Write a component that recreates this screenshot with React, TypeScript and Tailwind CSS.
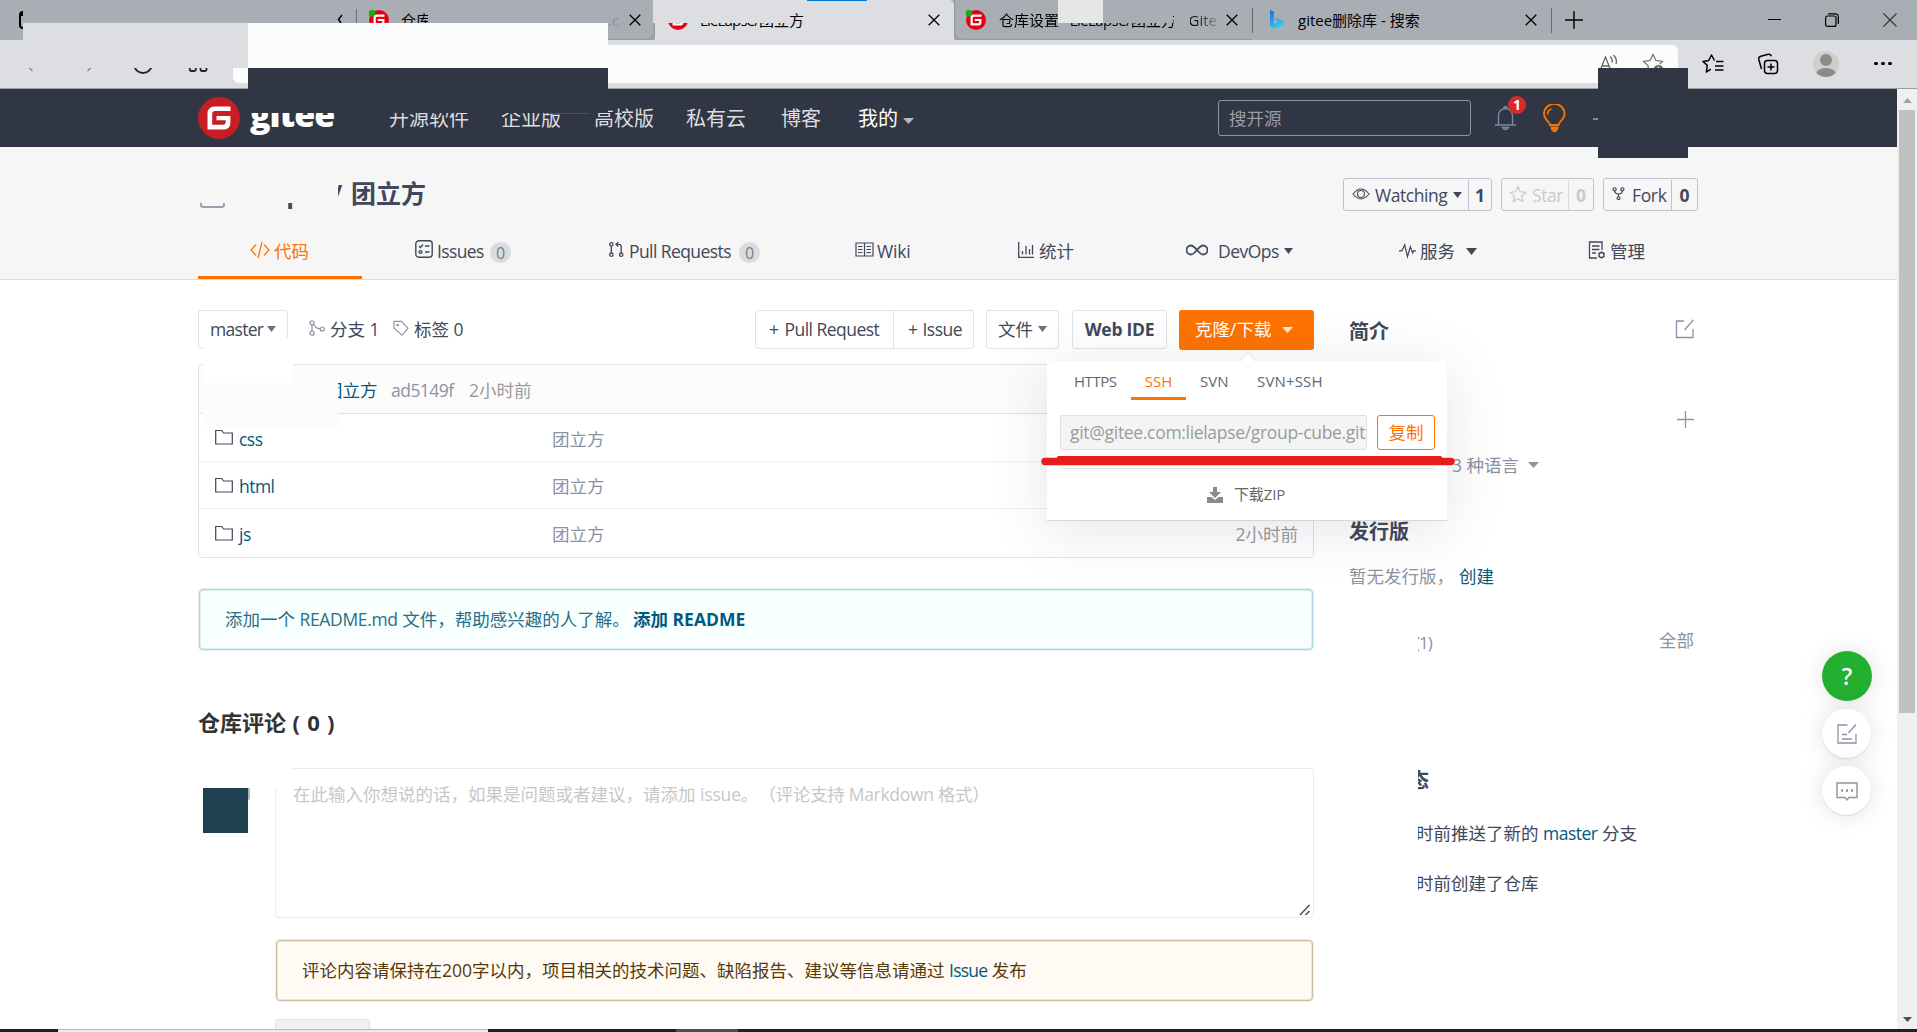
import React from 'react';

const MASK = 'absolute';

function Caret({ className }: { className: string }) {
  return (
    <svg viewBox="0 0 10 6" preserveAspectRatio="none" className={`shrink-0 ${className}`} fill="currentColor">
      <path d="M0 0h10L5 6z" />
    </svg>
  );
}

function Icon({ className, children, box = 20, sw = 1.3 }: { className: string; children: React.ReactNode; box?: number; sw?: number }) {
  return (
    <svg viewBox={`0 0 ${box} ${box}`} className={`shrink-0 ${className}`} fill="none" stroke="currentColor" strokeWidth={sw}>
      {children}
    </svg>
  );
}

function GiteeMark({ className, dot }: { className: string; dot?: boolean }) {
  return (
    <svg viewBox="0 0 42 42" className={`shrink-0 ${className}`}>
      <circle cx="21" cy="21" r="21" fill={dot ? '#e60012' : '#c71d23'} />
      <path
        d="M32.500 9.500H16A6.500 6.500 0 0 0 9.500 16v16.500h16.700a6.200 6.200 0 0 0 6.200-6.200v-7.300H18.500v4.200h9.200v1.800a2.800 2.800 0 0 1-2.800 2.800H14.200V17a3 3 0 0 1 3-3h15.300z"
        fill="#fff"
      />
      {dot && <circle cx="6" cy="7" r="7" fill="#0bb20c" />}
    </svg>
  );
}

function Cross({ className }: { className: string }) {
  return (
    <Icon box={12} sw={1.3} className={`size-[12px] ${className}`}>
      <path d="M.7.7l10.600 10.600M11.300.7L.7 11.300" />
    </Icon>
  );
}

function TabStrip() {
  return (
    <div className="relative flex h-[40px] shrink-0 items-start overflow-hidden bg-[#a9aeb4] text-[15px] text-black">
      <div className="flex h-[40px] w-[356px] shrink-0 items-center">
        <div className="ml-[19px] h-[18px] w-[16px] shrink-0 rounded-[4px] border-[2px] border-t-[5px] border-black" />
        <Icon box={12} sw={1.5} className="ml-[302px] size-[12px]"><path d="M5 1L1.500 5.500 4 9" /></Icon>
      </div>
      <div className="flex h-[40px] w-[299px] shrink-0 items-center rounded-br-[6px] shadow-[inset_-1px_-1px_2px_#8f949a]">
        <GiteeMark dot className="ml-[13px] size-[20px]" />
        <span className="ml-[12px] w-[228px] shrink-0 whitespace-nowrap leading-[20px]">仓库</span>
        <Cross className="" />
      </div>
      <div className="flex h-[40px] w-[299px] shrink-0 items-center rounded-t-[5px] bg-[#dddee1]">
        <GiteeMark dot className="ml-[13px] size-[20px]" />
        <span className="ml-[12px] w-[229px] shrink-0 whitespace-nowrap leading-[20px]"><span className="tracking-[-0.055em]">LieLapse/</span>团立方</span>
        <Cross className="-ml-[1px]" />
      </div>
      <div className="flex h-[40px] w-[298px] shrink-0 items-center rounded-bl-[6px] shadow-[inset_1px_-1px_2px_#8f949a]">
        <GiteeMark dot className="ml-[12px] size-[20px]" />
        <span className="ml-[13px] w-[228px] shrink-0 whitespace-nowrap bg-gradient-to-r from-black from-82% to-[#a9aeb4] to-98% bg-clip-text leading-[20px] text-transparent">仓库设置<span className="tracking-[-0.04em]"> - LieLapse/</span>团立方 - Gite</span>
        <Cross className="-ml-[1px]" />
      </div>
      <div className="mt-[8px] h-[25px] w-px shrink-0 bg-[#66696d]" />
      <div className="flex h-[40px] w-[298px] shrink-0 items-center">
        <svg viewBox="0 0 14 20" className="ml-[17px] h-[20px] w-[14px] shrink-0">
          <defs>
            <linearGradient id="bing" x1="0" y1="0" x2="0.6" y2="1">
              <stop offset="0" stopColor="#1b6fe0" />
              <stop offset="0.6" stopColor="#2fa9f4" />
              <stop offset="1" stopColor="#2bd3f0" />
            </linearGradient>
          </defs>
          <path d="M0 0l4 1.500v12.500l3.500-2-1.800-4L14 11v3.500L4.500 19 0 16z" fill="url(#bing)" />
        </svg>
        <span className="ml-[14px] w-[228px] shrink-0 whitespace-nowrap leading-[20px]">gitee删除库 - 搜索</span>
        <Cross className="-ml-[1px]" />
      </div>
      <div className="mt-[8px] h-[25px] w-px shrink-0 bg-[#66696d]" />
      <Icon box={18} sw={1.4} className="ml-[13px] mt-[11px] size-[18px]"><path d="M9 0v18M0 9h18" /></Icon>
      <div className="ml-[185px] mt-[19px] h-px w-[13px] shrink-0 bg-black" />
      <Icon box={14} sw={1.2} className="ml-[44px] mt-[13px] size-[14px]">
        <rect x=".6" y="3" width="10.400" height="10.400" rx="2" />
        <path d="M3 .8h7.500A2.800 2.800 0 0 1 13.300 3.600V11" />
      </Icon>
      <Icon box={14} sw={1.1} className="ml-[44px] mt-[13px] size-[14px] text-[#333]"><path d="M.5.5l13 13M13.500.5l-13 13" /></Icon>
    </div>
  );
}

function BrowserBar() {
  return (
    <div className="flex h-[49px] shrink-0 items-center border-b border-[#9b9fa3] bg-[#dddee1]">
      <Icon box={20} sw={1.3} className="ml-[24px] size-[20px] text-[#85878a]"><path d="M8.500 4L2 10.500l6.500 6.500" /></Icon>
      <Icon box={20} sw={1.3} className="ml-[33px] size-[20px] text-[#85878a]"><path d="M10.500 4l6.500 6.500-6.500 6.500" /></Icon>
      <Icon box={20} sw={1.8} className="ml-[36px] size-[20px] text-[#222]"><circle cx="10" cy="10" r="9" /></Icon>
      <Icon box={20} sw={1.8} className="ml-[35px] size-[20px] text-[#222]">
        <rect x="1.800" y="1" width="6" height="7" rx="1.500" /><rect x="12.500" y="1" width="6" height="7" rx="1.500" />
        <rect x="1.800" y="10" width="6" height="7" rx="1.500" /><rect x="12.500" y="10" width="6" height="7" rx="1.500" />
      </Icon>
      <div className="ml-[25px] flex h-[38px] w-[1445px] shrink-0 items-center rounded-[6px] bg-[#fcfcfc]">
        <Icon box={20} sw={1.3} className="ml-[1366px] size-[20px] text-[#666]">
          <path d="M1 17L6.500 3 12 17M3 12h7M11 2.500q3 2.500 2 6M14.500 1q4 4 2.500 9" />
        </Icon>
        <svg viewBox="0 0 22 22" className="ml-[23px] size-[22px]">
          <path d="M11 1.500l2.900 6 6.600.9-4.800 4.500 1.100 6.500L11 16.300l-5.800 3.100 1.100-6.500L1.500 8.400l6.600-.9z" fill="none" stroke="#777" strokeWidth="1.300" />
          <circle cx="16.500" cy="17" r="5.500" fill="#666" stroke="#fcfcfc" />
          <path d="M16.500 13.500v6" stroke="#fff" strokeWidth="1.200" />
        </svg>
      </div>
      <Icon box={22} sw={1.5} className="ml-[24px] size-[22px] text-black">
        <path d="M12.500 7.500L9.500 2 6.700 7.500l-5.700.9 4.300 4-1 6.600 4.500-2.800M14 8.500h7.500M13 13h8.500M13 17h8.500" strokeLinejoin="round" />
      </Icon>
      <Icon box={22} sw={1.5} className="ml-[33px] size-[22px] text-black">
        <rect x="7.500" y="7.500" width="13" height="13" rx="3" />
        <path d="M14 10.500v7M10.500 14h7M4.500 16L1.800 6.500q-.6-2.600 2-3.300l7.500-1.900q2.500-.5 3.200 2" />
      </Icon>
      <div className="ml-[34px] flex h-[26px] w-[26px] shrink-0 flex-col items-center overflow-hidden rounded-full bg-[#d0ceca]">
        <div className="mt-[3px] size-[12px] shrink-0 rounded-full bg-[#8d8a87]" />
        <div className="mt-[2px] h-[12px] w-[20px] shrink-0 rounded-[50%] bg-[#8d8a87]" />
      </div>
      <div className="-mt-[1px] ml-[35px] flex gap-[3.500px]">
        <i className="size-[3.500px] rounded-full bg-black" /><i className="size-[3.500px] rounded-full bg-black" /><i className="size-[3.500px] rounded-full bg-black" />
      </div>
    </div>
  );
}

function GiteeHeader() {
  return (
    <div className="flex h-[58px] shrink-0 items-center bg-[#303643] pt-[2px] text-[20px] leading-[28px] text-[#dcdde0]">
      <GiteeMark className="-mt-[2px] ml-[198px] size-[42px]" />
      <span className="-mt-[11px] ml-[10px] w-[139px] text-[34px] font-extrabold leading-[40px] tracking-[-0.03em] text-white">gitee</span>
      <span className="w-[112px]">开源软件</span>
      <span className="w-[93px]">企业版</span>
      <span className="w-[92px]">高校版</span>
      <span className="w-[95px]">私有云</span>
      <span className="w-[77px]">博客</span>
      <span className="w-[45px] whitespace-nowrap text-white">我的</span>
      <Caret className="mt-[4px] h-[6px] w-[11px] text-[#b6b9be]" />
      <div className="-mt-[3px] ml-[304px] flex h-[36px] w-[253px] items-center rounded-[3px] border border-[#8c92a4] pl-[10px] text-[17.500px] text-[#9a9ca3]">搜开源</div>
      <div className="relative -mt-[2px] ml-[24px] h-[26px] w-[22px]">
        <Icon box={24} sw={1.4} className="h-[26px] w-[24px] text-[#7888a8]">
          <path d="M0 19h21M3.500 19V9.500a7 7 0 0 1 14 0V19M9 2.500q0-2 1.500-2t1.500 2M7.500 21.500q3 4 6 0z" />
        </Icon>
        <div className="absolute -top-[9px] left-[13px] flex size-[18px] items-center justify-center rounded-full bg-[#db2828] text-[14px] font-bold leading-none text-white">1</div>
      </div>
      <Icon box={28} sw={1.8} className="-mt-[2px] ml-[23px] size-[28px] text-[#fe7300]">
        <path d="M10 21c0-3.500-6-5-6-11a10 10 0 0 1 20.500 0c0 6-6 7.500-6 11zM7.500 10.500q.3-4.500 4-5.500M10.500 23.500h8M11 25.300h7M12.500 27h4" />
      </Icon>
      <div className="ml-[25px] h-[2px] w-[6px] bg-[#7f88a0]" />
    </div>
  );
}

function Counter({ children }: { children: React.ReactNode }) {
  return <span className="mt-[3px] flex size-[21px] shrink-0 items-center justify-center rounded-full bg-[#dcdcdc] text-[16px] leading-none text-[#6f7c9c]">{children}</span>;
}

function RepoHead() {
  return (
    <div className="flex h-[133px] shrink-0 flex-col border-b border-[#dbdcde] bg-[#f6f6f6] text-[17.500px] text-[#40485b]">
      <div className="flex h-[92px] items-center whitespace-nowrap leading-[24px]">
        <div className="ml-[200px] mt-[2px] h-[28px] w-[25px] shrink-0 rounded-[3px] border-[2px] border-[#9a9fad]" />
        <span className="ml-[3px] w-[104px] shrink-0 text-[25px] font-bold leading-[32px] tracking-[-0.06em]">LieLapse</span>
        <span className="w-[19px] text-[25px] font-bold leading-[32px]">/</span>
        <span className="w-[992px] text-[25px] font-bold leading-[32px]">团立方</span>
        <div className="mt-[4px] flex h-[33px] w-[149px] items-center rounded-[3px] border border-[#bfc1ce]">
          <Icon box={20} sw={1.2} className="-mt-[2px] ml-[8px] size-[18px]"><path d="M1 10q9-11 18 0-9 11-18 0z" /><circle cx="10" cy="10" r="3.800" /></Icon>
          <span className="ml-[5px] w-[78px] tracking-[-0.025em]">Watching</span>
          <Caret className="h-[6px] w-[9px]" />
          <span className="ml-[6px] h-[30px] w-px bg-[#bfc1ce]" />
          <b className="flex-1 text-center">1</b>
        </div>
        <div className="ml-[9px] mt-[4px] flex h-[33px] w-[93px] items-center rounded-[3px] border border-[#bfc1ce] text-[#c9cacc]">
          <Icon box={20} sw={1.4} className="-mt-[2px] ml-[7px] size-[18px]"><path d="M10 2l2.500 5.500 6 .7-4.400 4 1.200 5.800L10 15.200 4.700 18l1.200-5.800-4.400-4 6-.7z" /></Icon>
          <span className="ml-[5px] w-[36px] tracking-[-0.025em]">Star</span>
          <span className="h-[30px] w-px bg-[#dcdde3]" />
          <b className="flex-1 text-center">0</b>
        </div>
        <div className="ml-[9px] mt-[4px] flex h-[33px] w-[95px] items-center rounded-[3px] border border-[#bfc1ce]">
          <Icon box={14} sw={1.3} className="-mt-[2px] ml-[8px] size-[13px]">
            <circle cx="2.800" cy="2.500" r="1.700" /><circle cx="11.200" cy="2.500" r="1.700" /><circle cx="7" cy="12" r="1.500" />
            <path d="M3 4.200q0 3 4 3.300 4-.3 4-3.300M7 7.500v3" />
          </Icon>
          <span className="ml-[7px] w-[39px] tracking-[-0.02em]">Fork</span>
          <span className="h-[30px] w-px bg-[#bfc1ce]" />
          <b className="flex-1 text-center">0</b>
        </div>
      </div>
      <div className="ml-[198px] flex h-[26px] items-center whitespace-nowrap leading-[24px]">
        <div className="flex h-[26px] w-[164px] items-center text-[#fe7300]">
          <Icon box={20} sw={1.3} className="-mt-[3px] ml-[52px] size-[20px]"><path d="M6 4.500L1 10l5 5.500M14 4.500l5 5.500-5 5.500M12 2L8 18" /></Icon>
          <span className="ml-[4px]">代码</span>
        </div>
        <Icon box={18} sw={1.4} className="-mt-[4px] ml-[53px] size-[18px]">
          <rect x=".8" y=".8" width="16.400" height="16.400" rx="3" />
          <path d="M4 6l1.500 1.500L8 4.500M10 6h4.500M10 12h4.500" /><circle cx="5.500" cy="12" r="1.400" />
        </Icon>
        <span className="ml-[4px] w-[53px] tracking-[-0.035em]">Issues</span>
        <Counter>0</Counter>
        <Icon box={16} sw={1.4} className="-mt-[4px] ml-[98px] size-[15px]">
          <circle cx="2.500" cy="2.500" r="1.800" /><circle cx="2.500" cy="13.500" r="1.800" /><circle cx="13" cy="13.500" r="1.800" />
          <path d="M2.500 4.500v7M13 11.500V5q0-2.500-2.500-2.500H7.500M9.800.2L7.500 2.500l2.300 2.300" />
        </Icon>
        <span className="ml-[5px] w-[110px] tracking-[-0.033em]">Pull Requests</span>
        <Counter>0</Counter>
        <Icon box={19} sw={1.2} className="-mt-[3px] ml-[95px] size-[19px]">
          <path d="M1 3h8.500v13H1zM9.500 3H18v13H9.500M3 6.500h4.500M3 9.500h4.500M3 12.500h4.500M11.500 6.500H16M11.500 9.500H16M11.500 12.500H16" />
        </Icon>
        <span className="ml-[3px] w-[141px] tracking-[-0.01em]">Wiki</span>
        <Icon box={16} sw={1.3} className="-mt-[3px] size-[16px]"><path d="M.7 0v15.300H16M4.500 12.500V9M8 12.500V4M11.500 12.500V7M14.500 12.500V3" /></Icon>
        <span className="ml-[5px] w-[147px]">统计</span>
        <Icon box={22} sw={1.8} className="-mt-[3px] size-[22px]"><path d="M11 11C8 7.500 6.500 6.500 5 6.500a4.500 4.500 0 0 0 0 9c1.500 0 3-1 6-4.500s4.500-4.500 6-4.500a4.500 4.500 0 0 1 0 9c-1.500 0-3-1-6-4.500z" /></Icon>
        <span className="ml-[10px] w-[66px] tracking-[-0.03em]">DevOps</span>
        <Caret className="h-[6px] w-[9px]" />
        <Icon box={18} sw={1.3} className="-mt-[2px] ml-[106px] size-[17px]"><path d="M0 9.500h3L6 3l3 12.500L12 5l2.500 6.500L15.500 9.500H18" /></Icon>
        <span className="ml-[4px] w-[46px]">服务</span>
        <Caret className="h-[7px] w-[11px]" />
        <Icon box={18} sw={1.3} className="-mt-[3px] ml-[111px] size-[18px]">
          <path d="M9 17H1.500V1h12.500v8M4 5h7.500M4 8.500h7.500M4 12h4" /><circle cx="13.500" cy="14" r="2.500" /><path d="M13.500 10.500v1M13.500 16.500v1M10.500 12.200l.9.500M15.600 15.300l.9.500M10.500 15.800l.9-.5M15.600 12.700l.9-.5" />
        </Icon>
        <span className="ml-[4px]">管理</span>
      </div>
      <div className="ml-[198px] mt-[12px] h-[3px] w-[164px] shrink-0 bg-[#fe7300]" />
    </div>
  );
}

function ActionRow() {
  return (
    <div className="flex h-[40px] items-start whitespace-nowrap leading-[22px]">
      <div className="flex h-[39px] w-[90px] items-center rounded-[3px] border border-[#dce3e8] pb-[2px]">
        <span className="ml-[11px] w-[57px] tracking-[-0.04em]">master</span>
        <Caret className="h-[6px] w-[9px] text-[#6b7283]" />
      </div>
      <div className="flex h-[39px] w-[467px] items-center pb-[2px]">
        <Icon box={16} sw={1.2} className="-mt-[2px] ml-[21px] size-[16px] text-[#8c92a4]">
          <circle cx="3" cy="2.800" r="2" /><circle cx="3" cy="13.200" r="2" /><circle cx="13.200" cy="9" r="2" /><path d="M3 4.800v6.400M4.800 4q1.500 4.500 6.400 4.800" />
        </Icon>
        <span className="ml-[5px] w-[62px]">分支 1</span>
        <Icon box={17} sw={1.2} className="-mt-[2px] ml-[1px] size-[16px] text-[#8c92a4]"><path d="M1 1.500h8L16 9l-6.500 7L1 8.500z" strokeLinejoin="round" /><circle cx="5" cy="5.300" r=".8" /></Icon>
        <span className="ml-[5px]">标签 0</span>
      </div>
      <div className="flex h-[39px] w-[219px] items-center rounded-[3px] border border-[#dce3e8] bg-white">
        <span className="flex w-[137px] gap-[6px] pb-[2px] pl-[13px] tracking-[-0.03em]"><i className="not-italic">+</i>Pull Request</span>
        <span className="flex h-full flex-1 items-center gap-[5px] border-l border-[#dce3e8] pb-[2px] pl-[14px] tracking-[-0.03em]"><i className="not-italic">+</i>Issue</span>
      </div>
      <div className="ml-[12px] flex h-[39px] w-[73px] items-center rounded-[3px] border border-[#dce3e8] bg-white pb-[2px]">
        <span className="ml-[11px] w-[40px]">文件</span>
        <Caret className="h-[6px] w-[9px] text-[#6b7283]" />
      </div>
      <div className="ml-[13px] flex h-[39px] w-[95px] items-center justify-center rounded-[3px] border border-[#dce3e8] bg-white pb-[2px] font-bold tracking-[-0.015em]">Web IDE</div>
      <div className="ml-[12px] flex h-[40px] w-[135px] items-center rounded-[3px] bg-[#fe7300] pb-[2px] text-white">
        <span className="ml-[16px] w-[87px]">克隆/下载</span>
        <Caret className="mt-[2px] h-[6px] w-[11px] text-[#ffe3cc]" />
      </div>
    </div>
  );
}

const rows = [
  { name: 'css', h: 'h-[48px]', age: '' },
  { name: 'html', h: 'h-[47px]', age: '' },
  { name: 'js', h: 'h-[48px]', age: '2小时前' },
];

function FileTable() {
  return (
    <div className="mt-[14px] flex h-[194px] flex-col rounded-[4px] border border-[#dce3e8] whitespace-nowrap leading-[24px] text-[#8c92a4]">
      <div className="flex h-[49px] items-center rounded-t-[4px] border-b border-[#dce3e8] bg-[#fcfcfc] pt-[2px]">
        <span className="ml-[126px] w-[66px] text-[#005980]">团立方</span>
        <span className="w-[78px] tracking-[-0.03em]">ad5149f</span>
        <span className="text-[#9b9b9b]">2小时前</span>
      </div>
      {rows.map((r, i) => (
        <div key={r.name} className={`flex items-center pt-[2px] ${r.h} ${i < 2 ? 'border-b border-[#eef1f4]' : ''}`}>
          <Icon box={18} sw={1.2} className="-mt-[3px] ml-[16px] size-[18px] text-[#40485b]"><path d="M.7 2.500h6l2 2.500h8.600v11H.7z" /></Icon>
          <span className="ml-[6px] w-[313px] tracking-[-0.03em] text-[#005980]">{r.name}</span>
          <span className="flex-1">团立方</span>
          <span className="mr-[15px] text-[#9b9b9b]">{r.age}</span>
        </div>
      ))}
    </div>
  );
}

function Comments() {
  return (
    <>
      <h2 className="mt-[55px] h-[34px] whitespace-nowrap text-[22px] font-bold leading-[34px] text-[#333]">仓库评论<span className="tracking-[0.035em]"> ( 0 )</span></h2>
      <div className="mt-[29px] flex">
        <div className="ml-[5px] mt-[20px] h-[45px] w-[45px] shrink-0 bg-[#1f4251]" />
        <div className="mt-[20px] h-[12px] w-[2px] shrink-0 rounded-br-full bg-[#b9b5ae]" />
        <div className="ml-[25px] w-[1039px]">
          <div className="flex h-[150px] items-start justify-between rounded-[3px] border border-[#ebebeb]">
            <span className="ml-[17px] mt-[11px] w-[475px] whitespace-nowrap leading-[28px] text-[#c7c7c7]">
              在此输入你想说的话，如果是问题或者建议，请添加 <span className="tracking-[-0.01em]">issue</span>。<span className="ml-[9px] tracking-[-0.018em]">（评论支持 Markdown 格式）</span>
            </span>
            <Icon box={12} sw={1.6} className="mb-[1px] mr-[2px] size-[12px] self-end text-[#555]"><path d="M1 11L10.500 1M6.500 11l4-4" /></Icon>
          </div>
          <div className="ml-[1px] mt-[22px] flex h-[61px] w-[1037px] items-center whitespace-nowrap rounded-[4px] border border-[#cdbe9f] bg-[#fffaf3] pl-[25px] text-[#573a08] shadow-[inset_0_0_0_1px_#efe6d6,0_0_0_1px_#eeeeec]">
            <span>评论内容请保持在200字以内，项目相关的技术问题、缺陷报告、建议等信息请通过 <span className="tracking-[-0.045em] text-[#005980]">Issue</span> 发布</span>
          </div>
          <div className="mt-[18px] h-[40px] w-[95px] rounded-[3px] border border-[#e2e2e2] bg-[#f0f0f0]" />
        </div>
      </div>
    </>
  );
}

function Sidebar() {
  return (
    <div className="ml-[35px] flex w-[346px] flex-col whitespace-nowrap leading-[24px]">
      <div className="flex h-[40px] items-center">
        <b className="flex-1 pt-[3px] text-[20px]">简介</b>
        <Icon box={20} sw={1.3} className="-mt-[3px] size-[20px] text-[#8c92a4]"><path d="M9 2H1.500v16.500H18V10M18.500.8L9.500 11" /></Icon>
      </div>
      <div className="mt-[61px] flex justify-end pr-[1px] text-[#8c92a4]"><Icon box={17} sw={1.3} className="size-[17px]"><path d="M8.500 0v17M0 8.500h17" /></Icon></div>
      <div className="mt-[25px] flex h-[24px] items-center text-[#8c92a4]">
        <span className="ml-[103px] w-[76px]">3 种语言</span>
        <Caret className="h-[6px] w-[11px]" />
      </div>
      <b className="mt-[43px] h-[24px] text-[20px]">发行版</b>
      <div className="mt-[20px] flex text-[#8c92a4]"><span className="w-[110px]">暂无发行版，</span><span className="text-[#005980]">创建</span></div>
      <div className="mt-[40px] flex h-[28px] text-[#8c92a4]"><span className="ml-[66px] flex-1 pt-[3px] text-[17px] tracking-[-0.06em]">(1)</span><span className="mr-[1px]">全部</span></div>
      <b className="mt-[113px] ml-[60px] h-[24px] text-[20px] leading-[24px]">态</b>
      <div className="ml-[67px] mt-[28px] h-[24px]">时前推送了新的 <span className="tracking-[-0.03em] text-[#005980]">master</span> 分支</div>
      <div className="ml-[67px] mt-[26px] h-[24px]">时前创建了仓库</div>
    </div>
  );
}

function CloneMenu() {
  return (
    <div className="absolute left-[1047px] top-[361px] h-[160px] w-[400px] border-b border-[#d6d7d8] bg-white text-[15px] text-[#606675] shadow-[0_8px_60px_rgba(40,50,70,0.13)]">
      <div className="absolute -top-[6px] left-[195px] size-[12px] rotate-45 border-l border-t border-[#e4e5e7] bg-white" />
      <div className="relative flex h-[39px] items-center bg-white pt-[1px] leading-[24px]">
        <span className="ml-[27px] w-[57px] tracking-[-0.03em]">HTTPS</span>
        <span className="flex h-[38px] w-[55px] items-center justify-center border-b-[3px] border-[#fe7300] pt-[3px] text-[#fe7300]">SSH</span>
        <span className="ml-[14px] w-[57px]">SVN</span>
        <span className="tracking-[0.01em]">SVN+SSH</span>
      </div>
      <div className="ml-[13px] mt-[15px] flex text-[17.500px] leading-[33px]">
        <div className="h-[35px] w-[307px] overflow-hidden whitespace-nowrap rounded-[2px] border border-[#dce3e8] bg-[#f4f4f4] pl-[9px] tracking-[-0.018em] text-[#9b9b9b]">git@gitee.com:lielapse/group-cube.git</div>
        <div className="ml-[10px] h-[35px] w-[58px] rounded-[3px] border border-[#fe7300] text-center text-[#fe7300]">复制</div>
      </div>
      <div className="ml-[13px] mt-[18px] h-px w-[375px] bg-[#e6e8ea]" />
      <div className="flex h-[52px] items-center">
        <svg viewBox="0 0 16 16" className="ml-[160px] size-[16px]" fill="#8a8a8a"><path d="M6 0h4v5h4L8 11 2 5h4zM0 10h4.500L8 13l3.500-3H16v6H0z" /></svg>
        <span className="-mt-[2px] ml-[11px] leading-[24px] tracking-[-0.01em] text-[#666]">下载ZIP</span>
      </div>
      <svg viewBox="0 0 414 10" className="absolute -left-[6px] top-[95px] h-[10px] w-[414px]">
        <path d="M4 5.500h406M19 3.500h379" stroke="#e71d1d" strokeWidth="7.500" strokeLinecap="round" />
      </svg>
    </div>
  );
}

function FloatButtons() {
  return (
    <div className="absolute left-[1822px] top-[651px] flex flex-col gap-[8px]">
      <div className="flex size-[50px] items-center justify-center rounded-full bg-[#23b031] text-[23px] font-semibold leading-none text-white shadow-[0_0_24px_rgba(0,0,0,0.12)]">?</div>
      <div className="flex size-[49px] items-center justify-center rounded-full bg-white text-[#8c92a4] shadow-[0_0_24px_rgba(0,0,0,0.12),0_1px_1px_rgba(0,0,0,0.1)]">
        <Icon box={20} sw={1.3} className="size-[20px]"><path d="M10.500 1H1v18h18v-9M19 .5l-7.500 8.500M5 10.500h5M5 15h10" /></Icon>
      </div>
      <div className="flex size-[49px] items-center justify-center rounded-full bg-white text-[#8c92a4] shadow-[0_0_24px_rgba(0,0,0,0.12),0_1px_1px_rgba(0,0,0,0.1)]">
        <Icon box={22} sw={1.4} className="size-[22px]"><path d="M1 3h20v14.500h-8L11 20l-2-2.500H1z" /><path d="M5 10.500h2M10 10.500h2M15 10.500h2" strokeWidth="2.400" /></Icon>
      </div>
    </div>
  );
}

function CoverPatches() {
  return (
    <>
      <div className={`${MASK} left-[23px] top-0 h-[23px] w-[314px] bg-[#a9aeb4]`} />
      <div className={`${MASK} left-[356px] top-[9px] h-[14px] w-px bg-[#66696d]`} />
      <div className={`${MASK} left-[428px] top-0 h-[23px] w-[180px] bg-[#a9aeb4]`} />
      <div className={`${MASK} left-[608px] top-[8px] h-[24px] w-[14px] overflow-hidden text-[15px] leading-[24px] text-[#8d9196]`}>.c</div>
      <div className={`${MASK} left-[23px] top-[23px] h-[45px] w-[225px] bg-[#dddee1]`} />
      <div className={`${MASK} left-[248px] top-[23px] h-[45px] w-[360px] bg-[#fcfcfc]`} />
      <div className={`${MASK} left-[248px] top-[68px] h-[45px] w-[360px] bg-[#303643]`} />
      <div className={`${MASK} left-[551px] top-[113px] h-px w-[38px] bg-[#c71d23]`} />
      <div className={`${MASK} left-[653px] top-0 h-[23px] w-[135px] bg-[#dddee1]`} />
      <div className={`${MASK} left-[807px] top-0 h-px w-[60px] bg-[#0078d7]`} />
      <div className={`${MASK} left-[1058px] top-0 h-[23px] w-[45px] bg-[#e6e6e6]`} />
      <div className={`${MASK} left-[1103px] top-[2px] h-[21px] w-[70px] bg-[#a9aeb4]`} />
      <div className={`${MASK} left-[1174px] top-[2px] h-[36px] w-[16px] bg-[#a9aeb4]`} />
      <div className={`${MASK} left-[1598px] top-[68px] h-[90px] w-[90px] bg-[#303643]`} />
      <div className={`${MASK} left-[198px] top-[158px] h-[45px] w-[140px] bg-[#f6f6f6]`} />
      <div className={`${MASK} left-[203px] top-[338px] h-[45px] w-[90px] bg-white`} />
      <div className={`${MASK} left-[203px] top-[383px] h-[45px] w-[135px] bg-[#fcfcfc]`} />
      <div className={`${MASK} left-[250px] top-[743px] h-[45px] w-[43px] bg-white`} />
      <div className={`${MASK} left-[1373px] top-[760px] h-[45px] w-[45px] bg-white`} />
      <div className={`${MASK} left-[1373px] top-[625px] h-[45px] w-[45px] bg-white`} />
      <div className={`${MASK} left-[1373px] top-[815px] h-[85px] w-[45px] bg-white`} />
    </>
  );
}

export default function App() {
  return (
    <div className="relative flex h-[1032px] w-[1917px] flex-col overflow-hidden bg-white font-['Open_Sans','Noto_Sans_CJK_SC',sans-serif]">
      <TabStrip />
      <BrowserBar />
      <div className="flex h-[940px] shrink-0 overflow-hidden">
        <div className="flex w-[1897px] flex-col">
          <GiteeHeader />
          <RepoHead />
          <div className="ml-[198px] mt-[30px] flex text-[17.500px] text-[#40485b]">
            <div className="flex w-[1116px] flex-col">
              <ActionRow />
              <FileTable />
              <div className="ml-[1px] mt-[31px] flex h-[61px] w-[1114px] items-center whitespace-nowrap rounded-[4px] border border-[#a9d5de] bg-[#f8ffff] pl-[25px] text-[#276f86] shadow-[inset_0_0_0_1px_#dceff3,0_0_0_1px_#e6eef0]">
                <span className="w-[408px]">添加一个 <span className="tracking-[-0.02em]">README.md</span> 文件，帮助感兴趣的人了解。</span>
                <b className="text-[#005980]">添加 README</b>
              </div>
              <Comments />
            </div>
            <Sidebar />
          </div>
        </div>
        <div className="flex w-[20px] flex-col items-center bg-[#f0f0f0]">
          <Caret className="mt-[9px] h-[5px] w-[9px] rotate-180 text-[#a3a3a3]" />
          <div className="mt-[7px] h-[603px] w-[16px] bg-[#c1c1c1]" />
          <Caret className="mt-[304px] h-[5px] w-[9px] text-[#505050]" />
        </div>
      </div>
      <div className="flex h-[3px] shrink-0 bg-[#231d26]">
        <div className="ml-[58px] h-[3px] w-[430px] border-t border-[#b8b8b8] bg-[#ececec]" />
        <div className="ml-[188px] w-[62px] bg-[#4e4c55]" />
      </div>
      <CloneMenu />
      <FloatButtons />
      <CoverPatches />
    </div>
  );
}
